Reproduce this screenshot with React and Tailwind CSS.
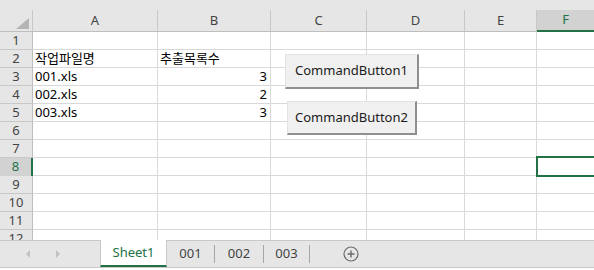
import React from "react";

const cols = [
  { key: "A", width: "w-[125px]" },
  { key: "B", width: "w-[113px]" },
  { key: "C", width: "w-[96px]" },
  { key: "D", width: "w-[98px]" },
  { key: "E", width: "w-[72px]" },
  { key: "F", width: "flex-1" },
];

const cells = {
  2: { A: "작업파일명", B: "추출목록수" },
  3: { A: "001.xls", B: 3 },
  4: { A: "002.xls", B: 2 },
  5: { A: "003.xls", B: 3 },
};

const font = { fontFamily: '"Noto Sans", "Noto Sans CJK KR", sans-serif' };

function CmdButton({ label, className }) {
  return (
    <div
      className={`absolute flex items-center justify-center bg-[#f0f0f0] border-t border-l border-t-[#e3e3e3] border-l-[#e3e3e3] border-r-2 border-b-2 border-r-[#8f8f8f] border-b-[#8f8f8f] text-[13px] text-[#1a1a1a] ${className}`}
    >
      {label}
    </div>
  );
}

export default function App() {
  const rows = Array.from({ length: 12 }, (_, i) => i + 1);

  return (
    <div className="w-[594px] h-[270px] bg-white overflow-hidden relative" style={font}>
      <div className="h-[240px] overflow-hidden relative">
        <div className="h-[10px] bg-[#e6e6e6]" />

        {/* column headers */}
        <div className="flex h-[22px] bg-[#e6e6e6] border-b border-[#bfbfbf]">
          <div className="w-[33px] shrink-0 border-r border-[#c8c8c8] relative">
            <div className="absolute right-[3px] bottom-[2px] w-0 h-0 border-l-[13px] border-l-transparent border-b-[11px] border-b-[#b4b4b4]" />
          </div>
          {cols.map((c) => (
            <div
              key={c.key}
              className={`${c.width} shrink-0 flex items-center justify-center text-[13px] ${
                c.key === "F"
                  ? "bg-[#d2d2d2] text-[#217346] border-b-2 border-[#217346] -mb-px"
                  : "text-[#444] border-r border-[#c8c8c8]"
              }`}
            >
              {c.key}
            </div>
          ))}
        </div>

        {rows.map((r) => (
          <div key={r} className="flex h-[18px] border-b border-[#d9d9d9]">
            <div
              className={`w-[33px] shrink-0 flex items-center justify-center text-[13px] border-r -mb-px ${
                r === 8
                  ? "bg-[#d2d2d2] text-[#217346] border-r-2 border-[#217346]"
                  : "bg-[#e6e6e6] text-[#444] border-[#bfbfbf] border-b border-b-[#c8c8c8]"
              }`}
            >
              {r}
            </div>
            {cols.map((c) => {
              const v = cells[r] && cells[r][c.key];
              const numeric = typeof v === "number";
              return (
                <div
                  key={c.key}
                  className={`${c.width} shrink-0 flex items-center px-[2px] text-[13px] text-black whitespace-nowrap ${
                    numeric ? "justify-end pr-[3px]" : ""
                  } ${c.key === "F" ? "" : "border-r border-[#d9d9d9]"}`}
                >
                  {v}
                </div>
              );
            })}
          </div>
        ))}

        {/* selected cell F8 */}
        <div className="absolute left-[536px] top-[156px] w-[62px] h-[21px] border-2 border-[#217346]" />

        <CmdButton label="CommandButton1" className="left-[285px] top-[54px] w-[134px] h-[35px]" />
        <CmdButton label="CommandButton2" className="left-[287px] top-[101px] w-[130px] h-[34px]" />
      </div>

      {/* sheet tabs */}
      <div className="h-[28px] bg-[#e6e6e6] border-t border-[#c8c8c8] border-b border-b-[#c8c8c8] flex items-stretch text-[13px] text-[#444]">
        <div className="w-[100px] shrink-0 flex items-center">
          <div className="ml-[26px] w-0 h-0 border-y-[4px] border-y-transparent border-r-[4px] border-r-[#c2c2c2]" />
          <div className="ml-[26px] w-0 h-0 border-y-[4px] border-y-transparent border-l-[4px] border-l-[#c2c2c2]" />
        </div>
        <div className="w-[67px] shrink-0 -mt-px bg-white border-x border-[#c8c8c8] border-b-2 border-b-[#217346] flex items-center justify-center text-[#217346]">
          Sheet1
        </div>
        <div className="w-[47px] flex items-center justify-center">001</div>
        <div className="w-px my-[4px] bg-[#a6a6a6]" />
        <div className="w-[48px] flex items-center justify-center">002</div>
        <div className="w-px my-[4px] bg-[#a6a6a6]" />
        <div className="w-[45px] flex items-center justify-center">003</div>
        <div className="w-px my-[4px] bg-[#a6a6a6]" />
        <div className="ml-[33px] flex items-center">
          <svg width="16" height="16" viewBox="0 0 16 16">
            <circle cx="8" cy="8" r="7" fill="none" stroke="#6b6b6b" strokeWidth="1.2" />
            <path d="M8 4.5v7M4.5 8h7" stroke="#6b6b6b" strokeWidth="1.4" />
          </svg>
        </div>
      </div>
    </div>
  );
}
